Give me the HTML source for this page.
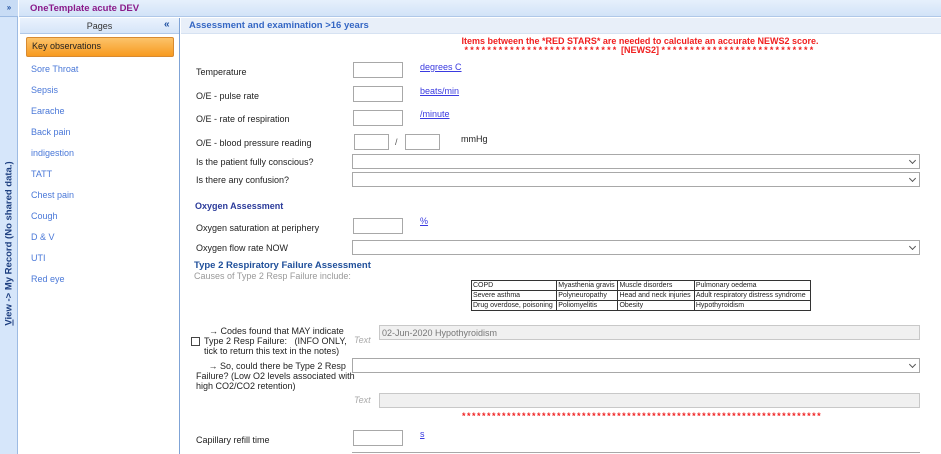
<!DOCTYPE html>
<html><head><meta charset="utf-8"><style>
*{margin:0;padding:0;box-sizing:border-box}
body{width:941px;height:454px;overflow:hidden;background:#fff;font-family:"Liberation Sans","DejaVu Sans",sans-serif;font-size:9px;color:#222;position:relative}
.a{position:absolute;white-space:nowrap}
.in{position:absolute;border:1px solid #a8a8a8;background:#fff;height:16px}
.sel{position:absolute;border:1px solid #a8a8a8;background:#fff;height:15px}
.sel:after{content:"";position:absolute;right:4px;top:3px;width:4px;height:4px;border-right:1px solid #555;border-bottom:1px solid #555;transform:rotate(45deg)}
.dis{position:absolute;border:1px solid #c8c8c8;background:#f0f0f0;height:15px;color:#777;font-size:9px;padding:2px 0 0 2px}
.u{position:absolute;color:#3a3ae0;text-decoration:underline}
.nav{position:absolute;left:31px;color:#4a78d8;font-size:9px}
.st{letter-spacing:2.2px}
table{border-collapse:collapse;font-size:7px}
td{border:1px solid #333;padding:0 1px;height:10px;line-height:9px;white-space:nowrap}
</style></head><body>
<div class="a" style="left:0;top:0;width:18px;height:454px;background:#d6e6fa;border-right:1px solid #9dbbe3"></div>
<div class="a" style="left:0;top:0;width:18px;height:17px;background:#c8dcf5;border-bottom:1px solid #9dbbe3;color:#1d4fa0;font-size:8px;font-weight:bold;text-align:center;line-height:16px">»</div>
<div class="a" style="left:-81px;top:238px;width:180px;text-align:center;transform:rotate(-90deg);font-weight:bold;color:#1d3f80;font-size:9.5px"><u>V</u>iew -&gt; My Record (No shared data.)</div>
<div class="a" style="left:19px;top:0;width:922px;height:17px;background:linear-gradient(#e6f0fc,#d2e3f8);border-bottom:1px solid #b0c8e8"></div>
<div class="a" style="left:30px;top:3px;color:#8a1a8a;font-weight:bold;font-size:9.5px">OneTemplate acute DEV</div>
<div class="a" style="left:19px;top:18px;width:161px;height:436px;border-right:1px solid #7fa3d6;background:#fff"></div>
<div class="a" style="left:20px;top:18px;width:159px;height:16px;background:linear-gradient(#eaf2fd,#d6e5f8);border-bottom:1px solid #b0c8e8;text-align:center;line-height:16px;color:#333">Pages</div>
<div class="a" style="left:164px;top:19px;color:#1d4fa0;font-weight:bold;font-size:10px">«</div>
<div class="a" style="left:26px;top:37px;width:148px;height:20px;background:linear-gradient(#fcc36a,#f79a20);border:1px solid #d88a30;border-radius:2px;padding:3px 0 0 5px;color:#222">Key observations</div>
<div class="nav" style="top:64px">Sore Throat</div>
<div class="nav" style="top:85px">Sepsis</div>
<div class="nav" style="top:106px">Earache</div>
<div class="nav" style="top:127px">Back pain</div>
<div class="nav" style="top:148px">indigestion</div>
<div class="nav" style="top:169px">TATT</div>
<div class="nav" style="top:190px">Chest pain</div>
<div class="nav" style="top:211px">Cough</div>
<div class="nav" style="top:232px">D &amp; V</div>
<div class="nav" style="top:253px">UTI</div>
<div class="nav" style="top:274px">Red eye</div>
<div class="a" style="left:181px;top:18px;width:760px;height:16px;background:#e8eff9;border-bottom:1px solid #d6e2f2"></div>
<div class="a" style="left:189px;top:20px;color:#3567c4;font-weight:bold;font-size:9.5px">Assessment and examination &gt;16 years</div>
<div class="a" style="left:440px;top:37px;width:400px;text-align:center;color:#f02020;font-weight:bold;font-size:9px;line-height:9px">Items between the *RED STARS* are needed to calculate an accurate NEWS2 score.<br><span class="st">***************************</span> [NEWS2] <span class="st">***************************</span></div>
<div class="a" style="left:196px;top:67px">Temperature</div><div class="in" style="left:353px;top:62px;width:50px"></div><div class="u" style="left:420px;top:62px">degrees C</div>
<div class="a" style="left:196px;top:91px">O/E - pulse rate</div><div class="in" style="left:353px;top:86px;width:50px"></div><div class="u" style="left:420px;top:86px">beats/min</div>
<div class="a" style="left:196px;top:114px">O/E - rate of respiration</div><div class="in" style="left:353px;top:110px;width:50px"></div><div class="u" style="left:420px;top:109px">/minute</div>
<div class="a" style="left:196px;top:138px">O/E - blood pressure reading</div><div class="in" style="left:354px;top:134px;width:35px"></div><div class="a" style="left:395px;top:137px;color:#555">/</div><div class="in" style="left:405px;top:134px;width:35px"></div><div class="a" style="left:461px;top:134px">mmHg</div>
<div class="a" style="left:196px;top:157px">Is the patient fully conscious?</div><div class="sel" style="left:352px;top:154px;width:568px"></div>
<div class="a" style="left:196px;top:175px">Is there any confusion?</div><div class="sel" style="left:352px;top:172px;width:568px"></div>
<div class="a" style="left:195px;top:201px;color:#2a3a9a;font-weight:bold">Oxygen Assessment</div>
<div class="a" style="left:196px;top:223px">Oxygen saturation at periphery</div><div class="in" style="left:353px;top:218px;width:50px"></div><div class="u" style="left:420px;top:216px">%</div>
<div class="a" style="left:196px;top:243px">Oxygen flow rate NOW</div><div class="sel" style="left:352px;top:240px;width:568px"></div>
<div class="a" style="left:194px;top:260px;color:#1f4f9a;font-weight:bold;font-size:9.5px">Type 2 Respiratory Failure Assessment</div>
<div class="a" style="left:194px;top:271px;color:#999">Causes of Type 2 Resp Failure include:</div>
<table class="a" style="left:471px;top:280px;width:340px">
<tr><td>COPD</td><td>Myasthenia gravis</td><td>Muscle disorders</td><td>Pulmonary oedema</td></tr>
<tr><td>Severe asthma</td><td>Polyneuropathy</td><td>Head and neck injuries</td><td>Adult respiratory distress syndrome</td></tr>
<tr><td>Drug overdose, poisoning</td><td>Poliomyelitis</td><td>Obesity</td><td>Hypothyroidism</td></tr></table>
<div class="a" style="left:191px;top:337px;width:9px;height:9px;border:1px solid #444;background:#fff"></div>
<div class="a" style="left:204px;top:326px;line-height:10px">&nbsp;&nbsp;→ Codes found that MAY indicate<br>Type 2 Resp Failure:&nbsp;&nbsp; (INFO ONLY,<br>tick to return this text in the notes)</div>
<div class="a" style="left:354px;top:335px;color:#aaa;font-style:italic">Text</div><div class="dis" style="left:379px;top:325px;width:541px">02-Jun-2020 Hypothyroidism</div>
<div class="a" style="left:196px;top:361px;line-height:10px">&nbsp;&nbsp;&nbsp;&nbsp;&nbsp;→ So, could there be Type 2 Resp<br>Failure? (Low O2 levels associated with<br>high CO2/CO2 retention)</div>
<div class="sel" style="left:352px;top:358px;width:568px"></div>
<div class="a" style="left:354px;top:395px;color:#aaa;font-style:italic">Text</div><div class="dis" style="left:379px;top:393px;width:541px"></div>
<div class="a" style="left:462px;top:411px;color:#f02020;font-size:9px;font-weight:bold;letter-spacing:1.5px">************************************************************************</div>
<div class="a" style="left:196px;top:435px">Capillary refill time</div><div class="in" style="left:353px;top:430px;width:50px"></div><div class="u" style="left:420px;top:429px">s</div>
<div class="a" style="left:352px;top:452px;width:568px;height:2px;border-top:1px solid #a8a8a8"></div>
</body></html>
